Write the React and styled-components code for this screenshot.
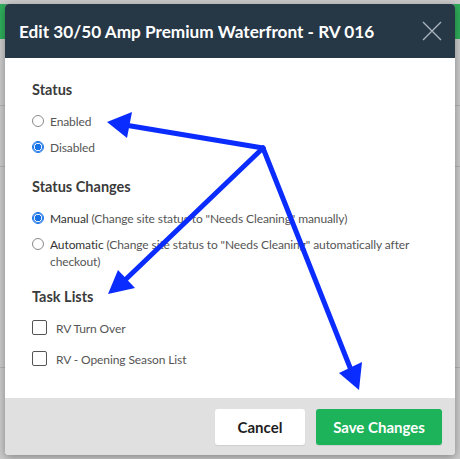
import React from "react";
import styled, { createGlobalStyle } from "styled-components";

const Global = createGlobalStyle`
  html, body { margin: 0; padding: 0; }
  body { font-family: Lato, "Open Sans", Arial, sans-serif; }
`;

const Page = styled.div`
  position: relative;
  width: 460px;
  height: 459px;
  overflow: hidden;
  background: #cbcbcb;
`;

const TopBar = styled.div`
  margin-top: 4px;
  height: 35px;
  background: #2fae5b;
`;

const BgRow = styled.div`
  height: ${(p) => p.$h}px;
  border-bottom: 1px solid #b3b3b3;
`;

const Modal = styled.div`
  position: absolute;
  top: 4px;
  left: 5px;
  width: 450px;
  height: 451px;
  display: flex;
  flex-direction: column;
  background: #fff;
  border-radius: 4px;
  overflow: hidden;
  box-shadow: 0 2px 8px rgba(0, 0, 0, 0.35);
`;

const Header = styled.div`
  height: 54px;
  flex: none;
  display: flex;
  align-items: center;
  justify-content: space-between;
  padding: 0 12px 0 14px;
  background: #263746;
`;

const Title = styled.h1`
  margin: 0;
  color: #fff;
  font-size: 17.2px;
  font-weight: 700;
`;

const CloseButton = styled.button`
  width: 22px;
  height: 22px;
  padding: 0;
  border: 0;
  background: none;
  display: flex;
  align-items: center;
  justify-content: center;
  cursor: pointer;
`;

const Body = styled.div`
  flex: 1;
  padding: 22px 27px 0;
`;

const Section = styled.section`
  margin-bottom: ${(p) => p.$space}px;
`;

const Heading = styled.h2`
  margin: 0 0 13px;
  font-size: 14.5px;
  line-height: 20px;
  font-weight: 700;
  color: #3b3b3b;
`;

const Options = styled.div`
  display: flex;
  flex-direction: column;
  gap: ${(p) => p.$gap}px;
`;

const Option = styled.label`
  display: flex;
  align-items: flex-start;
  gap: 6px;
  font-size: 12px;
  line-height: 17px;
  letter-spacing: -0.1px;
  color: #555;
`;

const Radio = styled.span`
  flex: none;
  box-sizing: border-box;
  width: 12px;
  height: 12px;
  margin-top: 2px;
  border-radius: 50%;
  border: 1px solid ${(p) => (p.$checked ? "#1672e6" : "#8a8a8a")};
  background: ${(p) =>
    p.$checked ? "radial-gradient(circle, #1672e6 0 3px, #fff 3.5px)" : "#fff"};
  box-shadow: ${(p) => (p.$checked ? "inset 0 0 0 1px #1672e6" : "none")};
`;

const Checkbox = styled.span`
  flex: none;
  box-sizing: border-box;
  width: 15px;
  height: 15px;
  margin-right: 3px;
  border: 1px solid #555;
  border-radius: 2px;
  background: #fff;
`;

const Strong = styled.span`
  color: #333;
`;

const Footer = styled.div`
  height: 57px;
  flex: none;
  display: flex;
  align-items: center;
  justify-content: flex-end;
  gap: 11px;
  padding-right: 13px;
  background: #e0e0e0;
`;

const Button = styled.button`
  height: 36px;
  width: ${(p) => p.$w}px;
  border: 0;
  border-radius: 3px;
  font-family: Lato, Arial, sans-serif;
  font-size: 15px;
  font-weight: 700;
  color: ${(p) => (p.$primary ? "#fff" : "#1e1e1e")};
  background: ${(p) => (p.$primary ? "#1db35b" : "#fff")};
  box-shadow: 0 1px 1px rgba(0, 0, 0, 0.08);
  cursor: pointer;
`;

const Annotations = styled.svg`
  position: absolute;
  inset: 0;
  pointer-events: none;
`;

const BLUE = "#0a2cff";

const App = () => {
  return (
    <Page>
      <Global />
      <TopBar />
      <BgRow $h={66} />
      <BgRow $h={60} />
      <BgRow $h={200} />

      <Modal>
        <Header>
          <Title>Edit 30/50 Amp Premium Waterfront - RV 016</Title>
          <CloseButton aria-label="Close">
            <svg width="20" height="20" viewBox="0 0 20 20">
              <path d="M1 1 L19 19 M19 1 L1 19" stroke="#aab3bc" strokeWidth="1.4" />
            </svg>
          </CloseButton>
        </Header>

        <Body>
          <Section $space={21}>
            <Heading>Status</Heading>
            <Options $gap={9}>
              <Option><Radio />Enabled</Option>
              <Option><Radio $checked />Disabled</Option>
            </Options>
          </Section>

          <Section $space={17}>
            <Heading>Status Changes</Heading>
            <Options $gap={9}>
              <Option>
                <Radio $checked />
                <span><Strong>Manual</Strong> (Change site status to "Needs Cleaning" manually)</span>
              </Option>
              <Option>
                <Radio />
                <span><Strong>Automatic</Strong> (Change site status to "Needs Cleaning" automatically after checkout)</span>
              </Option>
            </Options>
          </Section>

          <Section $space={0}>
            <Heading>Task Lists</Heading>
            <Options $gap={14}>
              <Option><Checkbox />RV Turn Over</Option>
              <Option><Checkbox />RV - Opening Season List</Option>
            </Options>
          </Section>
        </Body>

        <Footer>
          <Button $w={90}>Cancel</Button>
          <Button $w={126} $primary>Save Changes</Button>
        </Footer>
      </Modal>

      <Annotations width="460" height="459" viewBox="0 0 460 459">
        <g stroke={BLUE} strokeWidth="5" strokeLinecap="round">
          <line x1="263" y1="148" x2="125" y2="125" />
          <line x1="263" y1="148" x2="124" y2="281" />
          <line x1="263" y1="148" x2="351" y2="370" />
        </g>
        <g fill={BLUE}>
          <polygon points="107,122 132,112 127,138" />
          <polygon points="108,294 118,270 135,288" />
          <polygon points="359,390 339,373 362,362" />
        </g>
      </Annotations>
    </Page>
  );
};

export default App;
